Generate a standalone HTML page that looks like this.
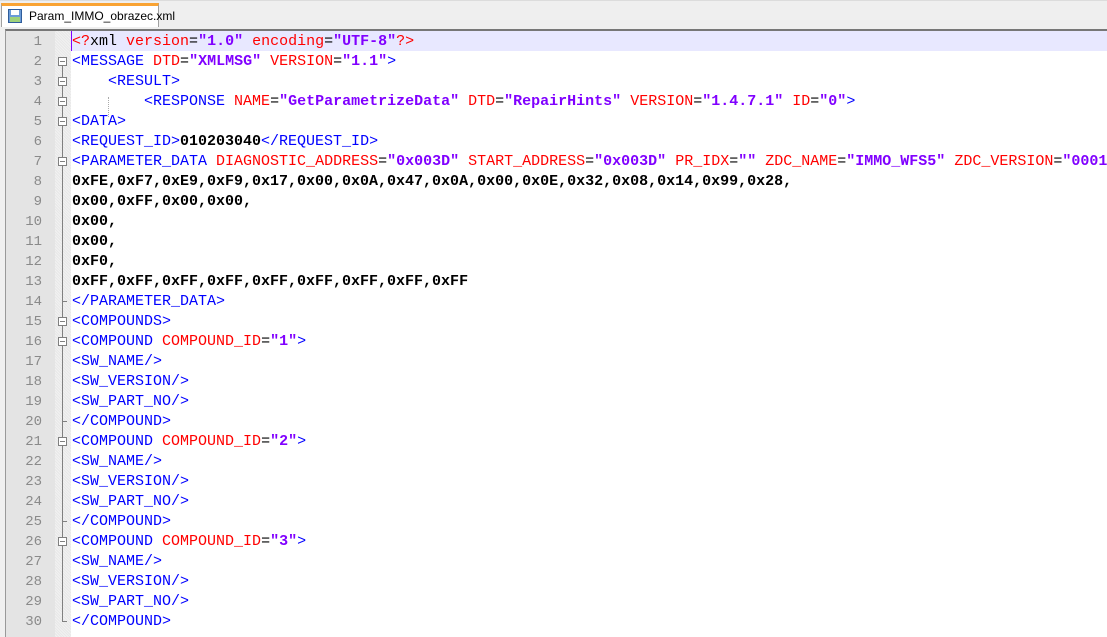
<!DOCTYPE html>
<html><head><meta charset="utf-8"><style>
body{margin:0;width:1107px;height:635px;overflow:hidden;background:#f0f0f0;font-family:"Liberation Sans",sans-serif;position:relative}
.tabbar{position:absolute;left:0;top:0;width:1107px;height:29px;background:#efefef;border-top:1px solid #dcdcdc}
.tab{position:absolute;left:1px;top:3px;width:158px;height:24px;background:#fff;border:1px solid #a0a0a0;border-bottom:none;border-top:3px solid #f9a333;box-sizing:border-box}
.tab span{position:absolute;left:27px;top:3px;font-size:12px;color:#000}
.ed{position:absolute;left:5px;top:29px;width:1102px;height:606px;background:#fff;border-top:2px solid #777;border-left:1px solid #999}
.ln{position:absolute;left:0;top:0;width:49px;height:606px;background:#e4e4e4}
.fold{position:absolute;left:49px;top:0;width:16px;height:606px;background:#f1f1f1;background-image:repeating-linear-gradient(45deg,#e8e8e8 0 1px,transparent 1px 2px)}
.hl{position:absolute;left:65px;top:0;width:1040px;height:20px;background:#e8e8ff;border-left:1px solid #8000ff}
.l{position:absolute;left:66px;height:20px;line-height:20px;font-family:"Liberation Mono",monospace;font-size:15px;white-space:pre;color:#000}
.n{position:absolute;left:0;width:36px;text-align:right;height:20px;line-height:20px;font-family:"Liberation Mono",monospace;font-size:14px;color:#8a8a8a}
.t{color:#0000ff}.a{color:#ff0000}.v{color:#8000ff;font-weight:bold}.b{font-weight:bold}
.box{position:absolute;left:52px;width:9px;height:9px;border:1px solid #808080;background:#fff;box-sizing:border-box}
.box:after{content:"";position:absolute;left:1px;top:3px;width:5px;height:1px;background:#808080}
.vl{position:absolute;left:56px;width:1px;background:#808080}
.end{position:absolute;left:56px;width:5px;height:1px;background:#808080}
</style></head><body>
<div class="tabbar"></div>
<div class="tab"><svg style="position:absolute;left:6px;top:3px" width="14" height="14"><rect x="0.5" y="0.5" width="13" height="13" fill="#6a9bd8" stroke="#2f5d9a"/><rect x="3" y="1" width="8" height="5" fill="#fff"/><rect x="2" y="8" width="10" height="5" fill="#9fd27a"/></svg><span>Param_IMMO_obrazec.xml</span></div>
<div class="ed">
<div class="ln"></div><div class="fold"></div>
<div class="hl"></div>
<div class="vl" style="top:28px;height:563px"></div>
<div class="box" style="top:26px"></div><div class="box" style="top:46px"></div><div class="box" style="top:66px"></div><div class="box" style="top:86px"></div><div class="box" style="top:126px"></div>
<div class="end" style="top:270px"></div>
<div class="box" style="top:286px"></div><div class="box" style="top:306px"></div>
<div class="end" style="top:390px"></div>
<div class="box" style="top:406px"></div>
<div class="end" style="top:490px"></div>
<div class="box" style="top:506px"></div>
<div class="end" style="top:590px"></div>
<div style="position:absolute;left:102px;top:66px;height:20px;border-left:1px dotted #aaa"></div>
<div class="n" style="top:1px">1</div><div class="n" style="top:21px">2</div><div class="n" style="top:41px">3</div><div class="n" style="top:61px">4</div><div class="n" style="top:81px">5</div><div class="n" style="top:101px">6</div><div class="n" style="top:121px">7</div><div class="n" style="top:141px">8</div><div class="n" style="top:161px">9</div><div class="n" style="top:181px">10</div><div class="n" style="top:201px">11</div><div class="n" style="top:221px">12</div><div class="n" style="top:241px">13</div><div class="n" style="top:261px">14</div><div class="n" style="top:281px">15</div><div class="n" style="top:301px">16</div><div class="n" style="top:321px">17</div><div class="n" style="top:341px">18</div><div class="n" style="top:361px">19</div><div class="n" style="top:381px">20</div><div class="n" style="top:401px">21</div><div class="n" style="top:421px">22</div><div class="n" style="top:441px">23</div><div class="n" style="top:461px">24</div><div class="n" style="top:481px">25</div><div class="n" style="top:501px">26</div><div class="n" style="top:521px">27</div><div class="n" style="top:541px">28</div><div class="n" style="top:561px">29</div><div class="n" style="top:581px">30</div>
<div class="l" style="top:1px"><span class="a">&lt;?</span>xml <span class="a">version</span>=<span class="v">"1.0"</span> <span class="a">encoding</span>=<span class="v">"UTF-8"</span><span class="a">?&gt;</span></div>
<div class="l" style="top:21px"><span class="t">&lt;MESSAGE</span> <span class="a">DTD</span>=<span class="v">"XMLMSG"</span> <span class="a">VERSION</span>=<span class="v">"1.1"</span><span class="t">&gt;</span></div>
<div class="l" style="top:41px">    <span class="t">&lt;RESULT&gt;</span></div>
<div class="l" style="top:61px">        <span class="t">&lt;RESPONSE</span> <span class="a">NAME</span>=<span class="v">"GetParametrizeData"</span> <span class="a">DTD</span>=<span class="v">"RepairHints"</span> <span class="a">VERSION</span>=<span class="v">"1.4.7.1"</span> <span class="a">ID</span>=<span class="v">"0"</span><span class="t">&gt;</span></div>
<div class="l" style="top:81px"><span class="t">&lt;DATA&gt;</span></div>
<div class="l" style="top:101px"><span class="t">&lt;REQUEST_ID&gt;</span><span class="b">010203040</span><span class="t">&lt;/REQUEST_ID&gt;</span></div>
<div class="l" style="top:121px"><span class="t">&lt;PARAMETER_DATA</span> <span class="a">DIAGNOSTIC_ADDRESS</span>=<span class="v">"0x003D"</span> <span class="a">START_ADDRESS</span>=<span class="v">"0x003D"</span> <span class="a">PR_IDX</span>=<span class="v">""</span> <span class="a">ZDC_NAME</span>=<span class="v">"IMMO_WFS5"</span> <span class="a">ZDC_VERSION</span>=<span class="v">"0001"</span></div>
<div class="l b" style="top:141px">0xFE,0xF7,0xE9,0xF9,0x17,0x00,0x0A,0x47,0x0A,0x00,0x0E,0x32,0x08,0x14,0x99,0x28,</div>
<div class="l b" style="top:161px">0x00,0xFF,0x00,0x00,</div>
<div class="l b" style="top:181px">0x00,</div>
<div class="l b" style="top:201px">0x00,</div>
<div class="l b" style="top:221px">0xF0,</div>
<div class="l b" style="top:241px">0xFF,0xFF,0xFF,0xFF,0xFF,0xFF,0xFF,0xFF,0xFF</div>
<div class="l" style="top:261px"><span class="t">&lt;/PARAMETER_DATA&gt;</span></div>
<div class="l" style="top:281px"><span class="t">&lt;COMPOUNDS&gt;</span></div>
<div class="l" style="top:301px"><span class="t">&lt;COMPOUND</span> <span class="a">COMPOUND_ID</span>=<span class="v">"1"</span><span class="t">&gt;</span></div>
<div class="l t" style="top:321px">&lt;SW_NAME/&gt;</div>
<div class="l t" style="top:341px">&lt;SW_VERSION/&gt;</div>
<div class="l t" style="top:361px">&lt;SW_PART_NO/&gt;</div>
<div class="l t" style="top:381px">&lt;/COMPOUND&gt;</div>
<div class="l" style="top:401px"><span class="t">&lt;COMPOUND</span> <span class="a">COMPOUND_ID</span>=<span class="v">"2"</span><span class="t">&gt;</span></div>
<div class="l t" style="top:421px">&lt;SW_NAME/&gt;</div>
<div class="l t" style="top:441px">&lt;SW_VERSION/&gt;</div>
<div class="l t" style="top:461px">&lt;SW_PART_NO/&gt;</div>
<div class="l t" style="top:481px">&lt;/COMPOUND&gt;</div>
<div class="l" style="top:501px"><span class="t">&lt;COMPOUND</span> <span class="a">COMPOUND_ID</span>=<span class="v">"3"</span><span class="t">&gt;</span></div>
<div class="l t" style="top:521px">&lt;SW_NAME/&gt;</div>
<div class="l t" style="top:541px">&lt;SW_VERSION/&gt;</div>
<div class="l t" style="top:561px">&lt;SW_PART_NO/&gt;</div>
<div class="l t" style="top:581px">&lt;/COMPOUND&gt;</div>
</div>
</body></html>
